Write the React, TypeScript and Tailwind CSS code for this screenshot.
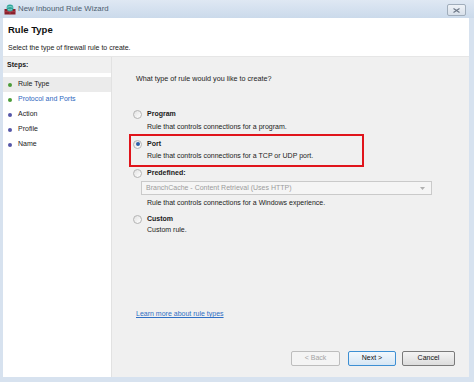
import React from 'react';

const steps = [
  { label: 'Rule Type', done: true, active: true },
  { label: 'Protocol and Ports', done: true, link: true },
  { label: 'Action' },
  { label: 'Profile' },
  { label: 'Name' },
];

function Radio({ checked = false }: { checked?: boolean }) {
  return (
    <span className="w-[9px] h-[9px] rounded-full border border-[#b4b4b4] bg-gradient-to-br from-[#e2e2e2] to-[#ffffff] flex items-center justify-center shrink-0">
      {checked && <span className="w-[4px] h-[4px] rounded-full bg-[#2d5fa8]" />}
    </span>
  );
}

function Option({ title, checked }: { title: string; checked?: boolean }) {
  return (
    <div className="flex items-center gap-[5px] h-[10px]">
      <Radio checked={checked} />
      <span className="font-bold text-[7px] text-[#1a1a1a]">{title}</span>
    </div>
  );
}

export default function App() {
  return (
    <div
      className="w-[474px] h-[382px] bg-[#d7e2ef] flex flex-col overflow-hidden"
      style={{ fontFamily: '"Liberation Sans", Arial, sans-serif' }}
    >
      {/* title bar */}
      <div className="h-[18px] shrink-0 flex items-center pl-[4px] pr-[8px] bg-gradient-to-b from-[#dfe8f3] to-[#cbdaeb]">
        <svg width="12" height="11" viewBox="0 0 12 11">
          <rect x="0.5" y="5" width="11" height="5.5" fill="#8a1f2a" />
          <line x1="0.5" y1="7.7" x2="11.5" y2="7.7" stroke="#c05060" strokeWidth="0.6" />
          <line x1="4" y1="5" x2="4" y2="7.7" stroke="#c05060" strokeWidth="0.6" />
          <line x1="8" y1="5" x2="8" y2="7.7" stroke="#c05060" strokeWidth="0.6" />
          <line x1="6" y1="7.7" x2="6" y2="10.5" stroke="#c05060" strokeWidth="0.6" />
          <circle cx="6" cy="4" r="3.4" fill="#2fa59a" />
          <path d="M3.2 3.2 Q6 1.8 8.8 3.2 M4 5.5 Q6 6.3 8 5.5" stroke="#bfeee6" strokeWidth="0.6" fill="none" />
        </svg>
        <span className="ml-[2px] text-[7.8px] text-[#4d5d6f]">New Inbound Rule Wizard</span>
        <div className="ml-auto w-[19px] h-[12px] mt-[2px] border border-[#a0adbb] rounded-[2px] bg-gradient-to-b from-[#eef2f7] to-[#d8e0ea] flex items-center justify-center">
          <svg width="7" height="5" viewBox="0 0 7 5">
            <path d="M0.5 0.5 L6.5 4.5 M6.5 0.5 L0.5 4.5" stroke="#6a7584" strokeWidth="1.1" />
          </svg>
        </div>
      </div>

      {/* window body */}
      <div className="ml-[3px] mr-[5px] mb-[5px] flex-1 flex flex-col bg-white">
        <div className="h-[39px] shrink-0 pl-[5px] pt-[6px] border-b border-[#e6e6e6]">
          <div className="font-bold text-[9.5px] leading-[11px] text-[#111]">Rule Type</div>
          <div className="mt-[9px] text-[7px] leading-[8px] text-[#222]">Select the type of firewall rule to create.</div>
        </div>

        <div className="flex-1 flex">
          {/* steps */}
          <div className="w-[109px] shrink-0 bg-white border-r border-[#e2e2e2]">
            <div className="h-[16px] bg-[#f0f0f0] pl-[4px] flex items-center font-bold text-[7px] text-[#1a1a1a]">Steps:</div>
            <div className="mt-[4px]">
              {steps.map((s) => (
                <div
                  key={s.label}
                  className={`h-[15px] flex items-center pl-[5px] gap-[6px] ${s.active ? 'bg-[#ebebeb]' : ''}`}
                >
                  <span className={`w-[4px] h-[4px] rounded-full ${s.done ? 'bg-[#4b9c39]' : 'bg-[#5557a8]'}`} />
                  <span className={`text-[7px] ${s.link ? 'text-[#2e68c0]' : 'text-[#222]'}`}>{s.label}</span>
                </div>
              ))}
            </div>
          </div>

          {/* content */}
          <div className="flex-1 bg-[#f0f0f0] flex flex-col pl-[21px] pr-[14px] pt-[17px] text-[7px] text-[#222]">
            <div className="leading-[10px] pl-[3px] text-[7.2px]">What type of rule would you like to create?</div>

            <div className="mt-[25px]">
              <Option title="Program" />
              <div className="mt-[3px] pl-[14px] leading-[10px]">Rule that controls connections for a program.</div>
            </div>

            <div className="relative mt-[7px]">
              <div className="absolute -left-[4px] -top-[5px] w-[235px] h-[33px] border-2 border-[#e0141b] pointer-events-none" />
              <Option title="Port" checked />
              <div className="mt-[2px] pl-[14px] leading-[10px]">Rule that controls connections for a TCP or UDP port.</div>
            </div>

            <div className="mt-[7px]">
              <Option title="Predefined:" />
              <div className="mt-[3px] ml-[8px] w-[291px] h-[14px] border border-[#cacaca] bg-[#f5f5f5] flex items-center pl-[4px] pr-[6px] text-[#9c9c9c]">
                <span>BranchCache - Content Retrieval (Uses HTTP)</span>
                <svg className="ml-auto" width="5" height="3" viewBox="0 0 5 3">
                  <path d="M0 0 L5 0 L2.5 3 Z" fill="#b0b0b0" />
                </svg>
              </div>
              <div className="mt-[3px] pl-[14px] leading-[10px]">Rule that controls connections for a Windows experience.</div>
            </div>

            <div className="mt-[6px]">
              <Option title="Custom" />
              <div className="mt-[1px] pl-[14px] leading-[10px]">Custom rule.</div>
            </div>

            <div className="mt-[74px] pl-[3px] leading-[10px]">
              <span className="text-[#2f6fc4] underline">Learn more about rule types</span>
            </div>

            <div className="mt-[32px] flex justify-end gap-[7px]">
              <div className="w-[49px] h-[15px] border border-[#bdbdbd] rounded-[2px] bg-[#f4f4f4] flex items-center justify-center text-[#a3a3a3]">&lt; Back</div>
              <div className="w-[48px] h-[15px] border border-[#3d8fd3] rounded-[2px] bg-gradient-to-b from-[#f2f8fd] to-[#d6e6f4] flex items-center justify-center text-[#111] ml-[1px]">Next &gt;</div>
              <div className="w-[53px] h-[15px] border border-[#7a7a7a] rounded-[2px] bg-gradient-to-b from-[#f4f4f4] to-[#dcdcdc] flex items-center justify-center text-[#111] -ml-[1px]">Cancel</div>
            </div>
          </div>
        </div>
      </div>
    </div>
  );
}
